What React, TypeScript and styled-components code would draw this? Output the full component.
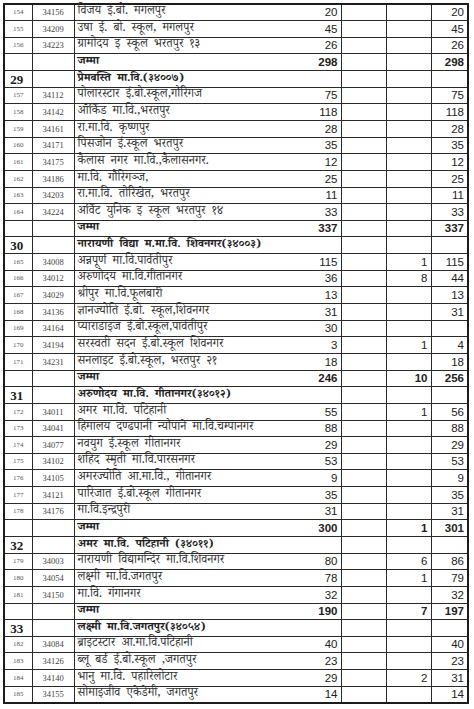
import React from 'react';
import styled, { createGlobalStyle } from 'styled-components';

const GlobalStyle = createGlobalStyle`
  html, body {
    margin: 0;
    padding: 0;
    background: #ffffff;
  }
  body {
    font-family: "Liberation Sans", Arial, sans-serif;
  }
`;

type Item = { sn: string; code: string; name: string; a?: number; b?: number; c?: number; total?: number };
type Block = { no: string; title?: string; items: Item[]; sum?: { a: number; c?: number; total: number } };

const blocks: Block[] = [
  {
    no: '',
    items: [
      { sn: '154', code: '34156', name: 'विजय ई.बो. मगलपुर', a: 20, total: 20 },
      { sn: '155', code: '34209', name: 'उषा ई. बो. स्कूल, मगलपुर', a: 45, total: 45 },
      { sn: '156', code: '34223', name: 'ग्रामोदय इ स्कूल भरतपुर १३', a: 26, total: 26 },
    ],
    sum: { a: 298, total: 298 },
  },
  {
    no: '29',
    title: 'प्रेमबस्ति मा.वि.(३४००७)',
    items: [
      { sn: '157', code: '34112', name: 'पोलारस्टार ई.बो.स्कूल,गौरिगज', a: 75, total: 75 },
      { sn: '158', code: '34142', name: 'ऑर्किड मा.वि.,भरतपुर', a: 118, total: 118 },
      { sn: '159', code: '34161', name: 'रा.मा.वि. कृष्णपुर', a: 28, total: 28 },
      { sn: '160', code: '34171', name: 'पिसजोन ई.स्कूल भरतपुर', a: 35, total: 35 },
      { sn: '161', code: '34175', name: 'कैलास नगर मा.वि.,कैलासनगर.', a: 12, total: 12 },
      { sn: '162', code: '34186', name: 'मा.वि. गौरिगञ्ज,', a: 25, total: 25 },
      { sn: '163', code: '34203', name: 'रा.मा.वि. तोरिखेत, भरतपुर', a: 11, total: 11 },
      { sn: '164', code: '34224', name: 'अर्विट युनिक इ स्कूल भरतपुर १४', a: 33, total: 33 },
    ],
    sum: { a: 337, total: 337 },
  },
  {
    no: '30',
    title: 'नारायणी विद्या म.मा.वि. शिवनगर(३४००३)',
    items: [
      { sn: '165', code: '34008', name: 'अन्नपूर्ण मा.वि.पार्वतीपुर', a: 115, c: 1, total: 115 },
      { sn: '166', code: '34012', name: 'अरुणोदय मा.वि.गीतानगर', a: 36, c: 8, total: 44 },
      { sn: '167', code: '34029', name: 'श्रीपुर मा.वि.फूलबारी', a: 13, total: 13 },
      { sn: '168', code: '34136', name: 'ज्ञानज्योति ई.बो. स्कूल,शिवनगर', a: 31, total: 31 },
      { sn: '169', code: '34164', name: 'प्याराडाइज ई.बो.स्कूल,पार्वतीपुर', a: 30 },
      { sn: '170', code: '34194', name: 'सरस्वती सदन ई.बो.स्कूल शिवनगर', a: 3, c: 1, total: 4 },
      { sn: '171', code: '34231', name: 'सनलाइट ई.बो.स्कूल, भरतपुर २१', a: 18, total: 18 },
    ],
    sum: { a: 246, c: 10, total: 256 },
  },
  {
    no: '31',
    title: 'अरुणोदय मा.वि. गीतानगर(३४०१२)',
    items: [
      { sn: '172', code: '34011', name: 'अमर मा.वि. पटिहानी', a: 55, c: 1, total: 56 },
      { sn: '173', code: '34041', name: 'हिमालय दण्ढपानी न्यौपाने मा.वि.चम्पानगर', a: 88, total: 88 },
      { sn: '174', code: '34077', name: 'नवयुग ई.स्कूल गीतानगर', a: 29, total: 29 },
      { sn: '175', code: '34102', name: 'शहिद स्मृती मा.वि.पारसनगर', a: 53, total: 53 },
      { sn: '176', code: '34105', name: 'अमरज्योति आ.मा.वि., गीतानगर', a: 9, total: 9 },
      { sn: '177', code: '34121', name: 'पारिजात ई.बो.स्कूल गीतानगर', a: 35, total: 35 },
      { sn: '178', code: '34176', name: 'मा.वि.इन्द्रपुरी', a: 31, total: 31 },
    ],
    sum: { a: 300, c: 1, total: 301 },
  },
  {
    no: '32',
    title: 'अमर मा.वि. पटिहानी (३४०११)',
    items: [
      { sn: '179', code: '34003', name: 'नारायणी विद्यामन्दिर मा.वि.शिवनगर', a: 80, c: 6, total: 86 },
      { sn: '180', code: '34054', name: 'लक्ष्मी मा.वि.जगतपुर', a: 78, c: 1, total: 79 },
      { sn: '181', code: '34150', name: 'मा.वि. गंगानगर', a: 32, total: 32 },
    ],
    sum: { a: 190, c: 7, total: 197 },
  },
  {
    no: '33',
    title: 'लक्ष्मी मा.वि.जगतपुर(३४०५४)',
    items: [
      { sn: '182', code: '34084', name: 'ब्राइटस्टार आ.मा.वि.पटिहानी', a: 40, total: 40 },
      { sn: '183', code: '34126', name: 'ब्लू बर्ड ई.बो.स्कूल ,जगतपुर', a: 23, total: 23 },
      { sn: '184', code: '34140', name: 'भानु मा.वि. पहारिलोटार', a: 29, c: 2, total: 31 },
      { sn: '185', code: '34155', name: 'सोमाइजीव एकेडेमी, जगतपुर', a: 14, total: 14 },
    ],
  },
];

const DEV = '"Noto Serif Devanagari", "Noto Sans Devanagari", "Lohit Devanagari", "Liberation Serif", serif';

type Kind = 'sn' | 'code' | 'name' | 'title' | 'first' | 'num' | 'group';

const Sheet = styled.div`
  padding: 3px 7px 0 3px;
`;

const Grid = styled.table`
  width: 464px;
  border-collapse: collapse;
  table-layout: fixed;
  border: 2px solid #1c1c1c;
  color: #222;
`;

const Row = styled.tr`
  height: 16.65px;
`;

const Cell = styled.td<{ $kind?: Kind }>`
  border: 1px solid #2a2a2a;
  padding: 0 3px 1px 3px;
  vertical-align: bottom;
  white-space: nowrap;
  line-height: 13px;
  ${(p) =>
    p.$kind === 'sn' &&
    `font-family: "Liberation Serif", serif; font-size: 7px; color: #555; text-align: center;`}
  ${(p) =>
    p.$kind === 'code' &&
    `font-family: "Liberation Serif", serif; font-size: 8.5px; color: #444; text-align: center;`}
  ${(p) =>
    p.$kind === 'name' &&
    `font-family: ${DEV}; font-size: 12px; line-height: 15px; padding-bottom: 0; word-spacing: 3px; color: #333; text-align: left; border-right: none;`}
  ${(p) =>
    p.$kind === 'title' &&
    `font-family: ${DEV}; font-size: 11.5px; line-height: 15px; padding-bottom: 0; word-spacing: 3px; font-weight: 700; color: #222; text-align: left; border-right: none;`}
  ${(p) =>
    p.$kind === 'first' &&
    `font-family: "Liberation Sans", Arial, sans-serif; font-size: 11.5px; color: #222; text-align: right; border-left: none;`}
  ${(p) =>
    p.$kind === 'num' &&
    `font-family: "Liberation Sans", Arial, sans-serif; font-size: 11.5px; color: #222; text-align: right;`}
  ${(p) =>
    p.$kind === 'group' &&
    `font-family: "Liberation Serif", serif; font-size: 13px; font-weight: 700; color: #1a1a1a; text-align: center; padding-right: 6px;`}
`;

const Bold = styled.span`
  font-weight: 700;
`;

// sn | code | name | first count | empty | extra | total
const cols = [28, 42, 227, 40, 45, 45, 37];

const show = (v?: number) => (v === undefined ? '' : v);

export default function App() {
  return (
    <>
      <GlobalStyle />
      <Sheet>
        <Grid>
          <colgroup>
            {cols.map((w, i) => (
              <col key={i} style={{ width: w }} />
            ))}
          </colgroup>
          <tbody>
            {blocks.map((blk, bi) => (
              <React.Fragment key={bi}>
                {blk.title && (
                  <Row>
                    <Cell $kind="group">{blk.no}</Cell>
                    <Cell />
                    <Cell $kind="title">{blk.title}</Cell>
                    <Cell $kind="first" />
                    <Cell />
                    <Cell />
                    <Cell />
                  </Row>
                )}
                {blk.items.map((it) => (
                  <Row key={it.sn}>
                    <Cell $kind="sn">{it.sn}</Cell>
                    <Cell $kind="code">{it.code}</Cell>
                    <Cell $kind="name">{it.name}</Cell>
                    <Cell $kind="first">{show(it.a)}</Cell>
                    <Cell $kind="num">{show(it.b)}</Cell>
                    <Cell $kind="num">{show(it.c)}</Cell>
                    <Cell $kind="num">{show(it.total)}</Cell>
                  </Row>
                ))}
                {blk.sum && (
                  <Row>
                    <Cell />
                    <Cell />
                    <Cell $kind="title">जम्मा</Cell>
                    <Cell $kind="first"><Bold>{blk.sum.a}</Bold></Cell>
                    <Cell $kind="num" />
                    <Cell $kind="num"><Bold>{show(blk.sum.c)}</Bold></Cell>
                    <Cell $kind="num"><Bold>{blk.sum.total}</Bold></Cell>
                  </Row>
                )}
              </React.Fragment>
            ))}
          </tbody>
        </Grid>
      </Sheet>
    </>
  );
}
